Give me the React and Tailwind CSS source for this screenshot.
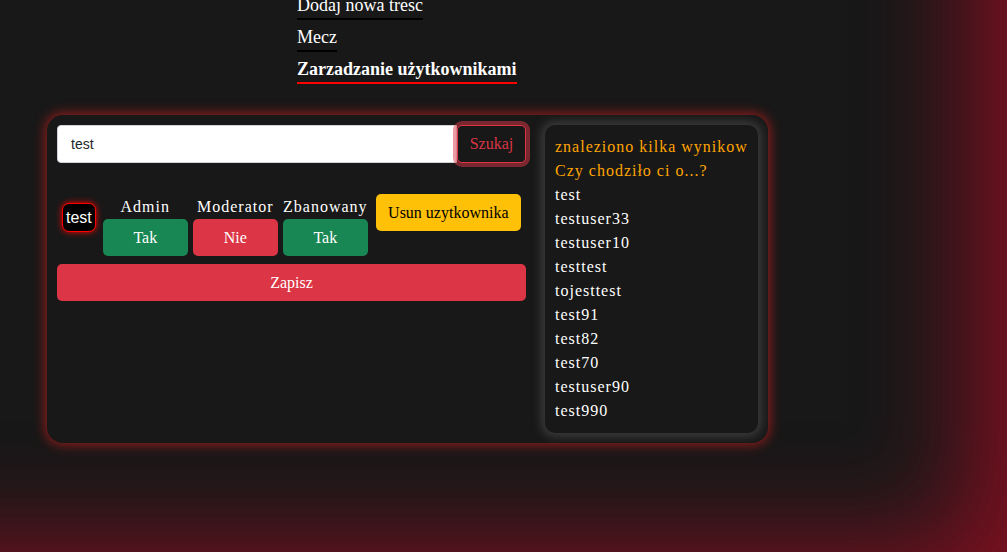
const navLinks = [
  { label: 'Dodaj nowa tresc' },
  { label: 'Mecz' },
  { label: 'Zarzadzanie użytkownikami', active: true },
]

const roles = [
  { name: 'Admin', on: true },
  { name: 'Moderator', on: false },
  { name: 'Zbanowany', on: true },
]

const results = ['test', 'testuser33', 'testuser10', 'testtest', 'tojesttest', 'test91', 'test82', 'test70', 'testuser90', 'test990']

const serif = "font-['Liberation_Serif','Times_New_Roman',serif]"
const sans = "font-['Liberation_Sans',Arial,sans-serif]"

export default function App() {
  return (
    <div className={`h-screen w-full overflow-hidden bg-[#181818] text-white ${serif} shadow-[inset_-100px_-70px_100px_-60px_#7c1020]`}>
      <nav className="ml-[297px] -mt-[3px] flex flex-col items-start gap-[9px]">
        {navLinks.map(l => (
          <a
            key={l.label}
            href="#"
            className={
              l.active
                ? 'text-[18px] leading-[17px] pb-[4px] border-b-2 border-[#ff0000] font-bold'
                : 'text-[18px] leading-[17px] pb-[4px] border-b-2 border-black'
            }
          >
            {l.label}
          </a>
        ))}
      </nav>

      <div className="ml-[47px] mt-[31px] w-[721px] rounded-2xl overflow-hidden bg-[#181818] p-[10px] flex gap-[19px] shadow-[0_0_12px_2px_rgba(210,30,30,0.65)]">
        <div className="w-[469px] shrink-0">
          <div className="flex h-[38px]">
            <input
              defaultValue="test"
              className={`flex-1 min-w-0 rounded-l-[4px] border border-[#ced4da] bg-white px-[13px] text-[14px] text-[#212529] outline-none ${sans}`}
            />
            <button className="w-[69px] shrink-0 rounded-[5px] border border-[#dc3545] bg-[#181818] text-[16px] text-[#dc3545] shadow-[0_0_0_4px_rgba(220,53,69,0.5)]">
              Szukaj
            </button>
          </div>

          <div className="mt-[31px] flex items-start">
            <span className={`ml-[5px] mt-[9px] rounded-[7px] border border-[#ff0000] bg-black px-[3px] py-[4px] text-[16px] leading-[19px] shadow-[0_0_6px_#ff0000] ${sans}`}>
              test
            </span>
            <div className="ml-[7px] mt-[4px] flex gap-[5px]">
              {roles.map(r => (
                <div key={r.name} className="w-[85px] flex flex-col items-center">
                  <span className="text-[16px] leading-[18px] tracking-[1px] mb-[3px]">{r.name}</span>
                  <button
                    className={`h-[37px] w-full rounded-[5px] text-[16px] text-white ${r.on ? 'bg-[#198754]' : 'bg-[#dc3545]'}`}
                  >
                    {r.on ? 'Tak' : 'Nie'}
                  </button>
                </div>
              ))}
            </div>
            <button className="ml-[8px] h-[37px] w-[145px] rounded-[5px] bg-[#ffc107] text-[16px] text-black">
              Usun uzytkownika
            </button>
          </div>

          <button className="mt-[8px] h-[37px] w-full rounded-[5px] bg-[#dc3545] text-[16px] text-white">Zapisz</button>
        </div>

        <div className="w-[213px] shrink-0 rounded-[10px] bg-[#181818] px-[10px] py-[10px] text-[16px] leading-[24px] tracking-[1px] shadow-[0_0_10px_4px_#3a3a3a]">
          <p className="text-[#ffa500]">znaleziono kilka wynikow</p>
          <p className="text-[#ffa500]">Czy chodziło ci o...?</p>
          {results.map(r => (
            <p key={r}>{r}</p>
          ))}
        </div>
      </div>
    </div>
  )
}
